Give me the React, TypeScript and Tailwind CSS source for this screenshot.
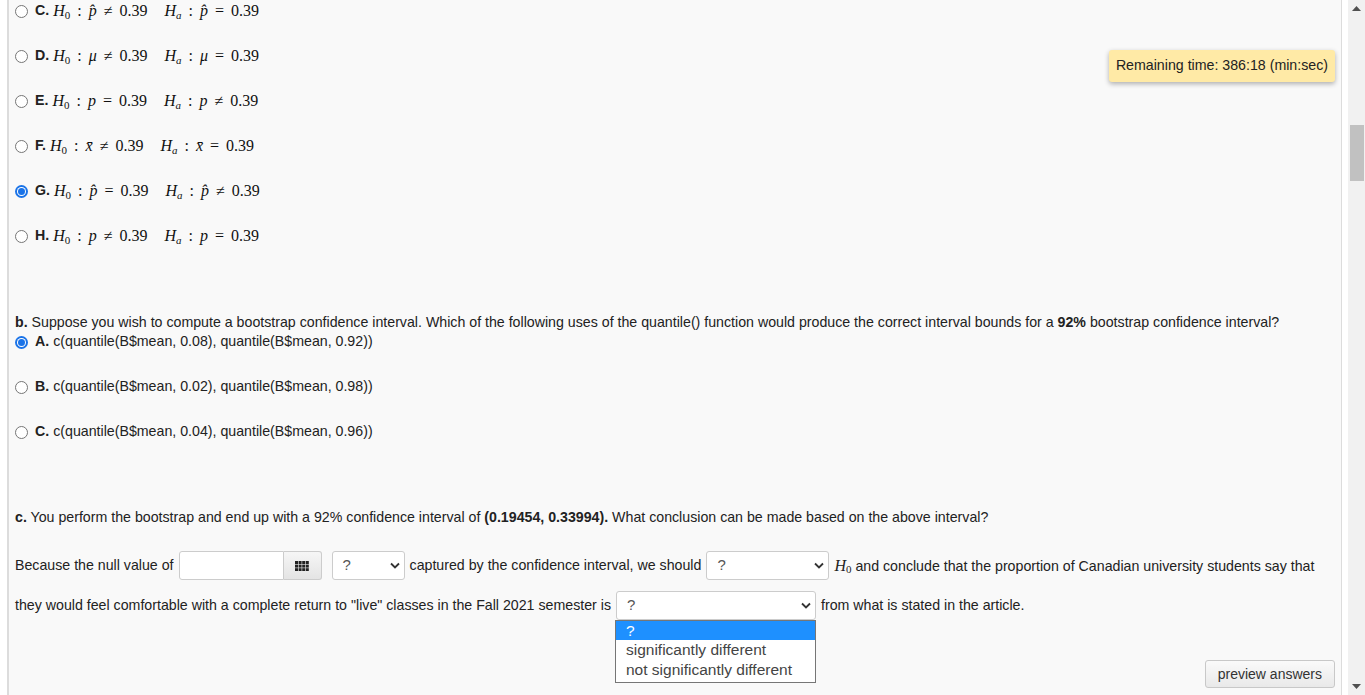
import React from 'react';

const sans = { fontFamily: '"Liberation Sans", Arial, sans-serif' };
const serif = { fontFamily: '"Liberation Serif", "DejaVu Serif", serif' };

function Radio({ checked }: { checked?: boolean }) {
  if (checked) {
    return (
      <span className="inline-flex items-center justify-center w-[13px] h-[13px] rounded-full bg-[#1a73e8] shrink-0">
        <span className="inline-flex items-center justify-center w-[9px] h-[9px] rounded-full bg-white">
          <span className="w-[7px] h-[7px] rounded-full bg-[#1a73e8]" />
        </span>
      </span>
    );
  }
  return <span className="inline-block w-[13px] h-[13px] rounded-full border border-[#767676] bg-white shrink-0" />;
}

function H({ sub }: { sub: string }) {
  return (
    <span className="italic">
      H<sub className={sub === '0' ? 'not-italic text-[11px]' : 'text-[11px]'}>{sub}</sub>
    </span>
  );
}

function Rel({ children }: { children: React.ReactNode }) {
  return <span className="mx-[7px]">{children}</span>;
}

function Hyp({ sym, op1, op2 }: { sym: React.ReactNode; op1: string; op2: string }) {
  return (
    <span className="text-[16px] text-[#111] whitespace-pre" style={serif}>
      <H sub="0" />
      <Rel>:</Rel>
      {sym}
      <Rel>{op1}</Rel>
      0.39
      <span className="inline-block w-[17px]" />
      <H sub="a" />
      <Rel>:</Rel>
      {sym}
      <Rel>{op2}</Rel>
      0.39
    </span>
  );
}

function Option({ letter, checked, children }: { letter: string; checked?: boolean; children: React.ReactNode }) {
  return (
    <div className="flex items-center h-5 gap-[7px]">
      <Radio checked={checked} />
      <span className="flex items-center gap-[4px]">
        <b>{letter}.</b>
        {children}
      </span>
    </div>
  );
}

function Chevron() {
  return (
    <svg width="10" height="7" viewBox="0 0 10 7" className="shrink-0">
      <path d="M1 1.5 L5 5.5 L9 1.5" fill="none" stroke="#333" strokeWidth="1.8" />
    </svg>
  );
}

function Select({ width, open }: { width: string; open?: boolean }) {
  return (
    <span className="relative inline-block">
      <span className={`flex items-center justify-between h-[29px] ${width} bg-white border border-[#ccc] rounded-[3px] pl-[10px] pr-[4px]`}>
        <span className="text-[15px] text-[#555]">?</span>
        <Chevron />
      </span>
      {open && (
        <span className="absolute left-[-1px] top-[29px] w-[201px] bg-white border border-[#767676] z-10 flex flex-col text-[15.5px] leading-[20px] text-[#444]">
          <span className="bg-[#1e90ff] text-white pl-[10px] h-[19px]">?</span>
          <span className="pl-[10px]">significantly different</span>
          <span className="pl-[10px] pb-[2px]">not significantly different</span>
        </span>
      )}
    </span>
  );
}

function GridIcon() {
  return (
    <svg width="14" height="10" viewBox="0 0 14 10">
      {[0, 1, 2].map((r) =>
        [0, 1, 2, 3].map((c) => (
          <rect key={`${r}-${c}`} x={c * 3.6} y={r * 3.6} width="3" height="3" fill="#222" />
        ))
      )}
    </svg>
  );
}

export default function App() {
  const phat = <span className="italic">p̂</span>;
  return (
    <div className="flex w-[1365px] h-[695px] overflow-hidden bg-white text-[#222]" style={sans}>
      <div className="w-[7px] shrink-0 bg-white" />
      <div className="relative w-[1335px] shrink-0 h-full bg-[#f9f9f9] border-l-2 border-r border-[#dcdcdc] pl-[6px] pt-[1px] text-[14.2px]">
        <div className="absolute top-[50px] right-[6px] bg-[#ffeaa6] rounded-[3px] shadow-[0_2px_5px_rgba(0,0,0,0.3)] px-[7px] h-[32px] flex items-center text-[14.2px] text-[#222]">
          Remaining time: 386:18 (min:sec)
        </div>

        <div className="flex flex-col gap-[25px]">
          <Option letter="C">
            <Hyp sym={phat} op1="≠" op2="=" />
          </Option>
          <Option letter="D">
            <Hyp sym={<span className="italic">μ</span>} op1="≠" op2="=" />
          </Option>
          <Option letter="E">
            <Hyp sym={<span className="italic">p</span>} op1="=" op2="≠" />
          </Option>
          <Option letter="F">
            <Hyp sym={<span className="italic">x̄</span>} op1="≠" op2="=" />
          </Option>
          <Option letter="G" checked>
            <Hyp sym={phat} op1="=" op2="≠" />
          </Option>
          <Option letter="H">
            <Hyp sym={<span className="italic">p</span>} op1="≠" op2="=" />
          </Option>
        </div>

        <div className="mt-[69px] h-[16px] flex items-center">
          <p>
            <b>b.</b> Suppose you wish to compute a bootstrap confidence interval. Which of the following uses of the quantile() function would produce the correct interval bounds for a <b>92%</b> bootstrap confidence interval?
          </p>
        </div>
        <div className="flex flex-col gap-[25px] mt-[1px]">
          <Option letter="A" checked>
            <span>c(quantile(B$mean, 0.08), quantile(B$mean, 0.92))</span>
          </Option>
          <Option letter="B">
            <span>c(quantile(B$mean, 0.02), quantile(B$mean, 0.98))</span>
          </Option>
          <Option letter="C">
            <span>c(quantile(B$mean, 0.04), quantile(B$mean, 0.96))</span>
          </Option>
        </div>

        <div className="mt-[68px] h-[16px] flex items-center">
          <p>
            <b>c.</b> You perform the bootstrap and end up with a 92% confidence interval of <b>(0.19454, 0.33994).</b> What conclusion can be made based on the above interval?
          </p>
        </div>

        <div className="mt-[25px] flex items-center h-[29px] gap-[5px]">
          <span>Because the null value of</span>
          <span className="flex items-center">
            <span className="w-[105px] h-[29px] bg-white border border-[#ccc] rounded-l-[3px]" />
            <span className="w-[38px] h-[29px] flex items-center justify-center border border-l-0 border-[#ccc] rounded-r-[3px] bg-gradient-to-b from-[#f6f6f6] to-[#e4e4e4]">
              <GridIcon />
            </span>
          </span>
          <span className="ml-[5px]">
            <Select width="w-[73px]" />
          </span>
          <span>captured by the confidence interval, we should</span>
          <Select width="w-[123px]" />
          <span>
            <span className="italic text-[16px]" style={serif}>
              H<sub className="not-italic text-[11px]">0</sub>
            </span>{' '}
            and conclude that the proportion of Canadian university students say that
          </span>
        </div>

        <div className="mt-[11px] flex items-center h-[29px] gap-[5px]">
          <span>they would feel comfortable with a complete return to "live" classes in the Fall 2021 semester is</span>
          <Select width="w-[200px]" open />
          <span>from what is stated in the article.</span>
        </div>

        <div className="flex justify-end pr-[6px] mt-[40px]">
          <button className="h-[28px] px-[12px] border border-[#c8c8c8] rounded-[3px] bg-gradient-to-b from-[#fafafa] to-[#e9e9e9] text-[14px] text-[#333]">
            preview answers
          </button>
        </div>
      </div>
      <div className="w-[6px] shrink-0 bg-white" />
      <div className="w-[17px] shrink-0 h-full bg-[#f1f1f1] flex flex-col items-center">
        <svg width="9" height="5" viewBox="0 0 9 5" className="mt-[6px]">
          <path d="M0 5 L4.5 0 L9 5 Z" fill="#505050" />
        </svg>
        <div className="mt-[114px] w-[14px] h-[56px] bg-[#c1c1c1]" />
        <div className="flex-1" />
        <svg width="9" height="5" viewBox="0 0 9 5" className="mb-[6px]">
          <path d="M0 0 L4.5 5 L9 0 Z" fill="#505050" />
        </svg>
      </div>
    </div>
  );
}
